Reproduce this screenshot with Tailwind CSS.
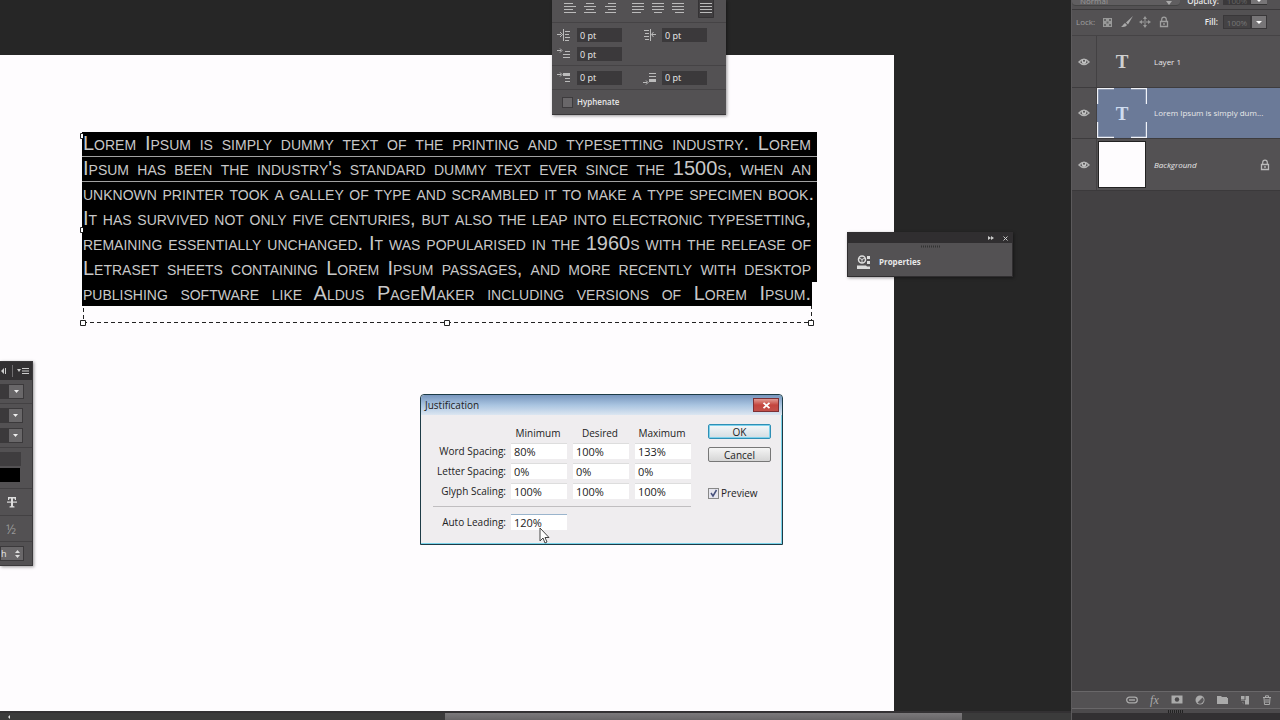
<!DOCTYPE html>
<html lang="en">
<head>
<meta charset="utf-8">
<title>Justification</title>
<script src="https://cdn.jsdelivr.net/npm/@tailwindcss/browser@4"></script>
</head>
<body class="h-screen overflow-hidden bg-[#262626] font-['Open_Sans',sans-serif] text-[8px] text-[#e8e8e8]">
<svg class="hidden">
  <symbol id="eye" viewBox="0 0 12 10"><path d="M1 5Q6-.5 11 5Q6 10 1 5Z" fill="none" stroke="#b4b4b4" stroke-width="1.4"/><circle cx="6" cy="4.6" r="2.3" fill="#c4c4c4"/><circle cx="6" cy="3.8" r="1" fill="#504e50"/></symbol>
  <symbol id="lock" viewBox="0 0 10 12"><path d="M2.7 6V3.5a2.3 2.3 0 014.6 0V6" fill="none" stroke="currentColor" stroke-width="1.2"/><path d="M1.5 5.5h7v5h-7zM5 7v2" fill="none" stroke="currentColor" stroke-width="1.3"/></symbol>
</svg>
<div class="relative flex h-full">
  <main class="relative flex min-w-0 flex-1 flex-col">
    <section class="relative mt-[55px] mr-[177px] flex-1 bg-[#fefcfe]">
      <div class="absolute top-[77px] left-[82px] w-[735px]">
        <div class="font-['Liberation_Sans',Arial,sans-serif] text-[20px] leading-[23px] text-[#c8c8c8] [font-variant-caps:small-caps] [text-align-last:justify] whitespace-nowrap">
          <p class="h-[25px] border-b border-[#a0a0a0] bg-black pr-[6px] pl-px">Lorem Ipsum is simply dummy text of the printing and typesetting industry. Lorem</p>
          <p class="h-[25px] border-b border-[#a0a0a0] bg-black pr-[6px] pl-px">Ipsum has been the industry's standard dummy text ever since the 1500s, when an</p>
          <p class="h-[25px] bg-black pr-[6px] pl-px">unknown printer took a galley of type and scrambled it to make a type specimen book.</p>
          <p class="h-[25px] bg-black pr-[6px] pl-px">It has survived not only five centuries, but also the leap into electronic typesetting,</p>
          <p class="h-[25px] bg-black pr-[6px] pl-px">remaining essentially unchanged. It was popularised in the 1960s with the release of</p>
          <p class="h-[25px] bg-black pr-[6px] pl-px">Letraset sheets containing Lorem Ipsum passages, and more recently with desktop</p>
          <p class="mr-[5px] h-[24px] bg-black pr-px pl-px">publishing software like Aldus PageMaker including versions of Lorem Ipsum.</p>
        </div>
        <svg class="absolute -top-[2px] -left-[2px] h-[196px] w-[738px]" viewBox="0 0 738 196" fill="none" stroke="#222">
          <path d="M3.500 178V192.500H731.500V176" stroke-dasharray="4 3"/>
          <g fill="#fff"><path d="M3 3.500H.5v5H3M3 97.500H.5v5H3"/><path d="M.5 190.500h5v5h-5zM364.500 190.500h5v5h-5zM728.500 190.500h5v5h-5z"/></g>
        </svg>
      </div>
    </section>
    <div class="flex h-[9px] border-t-2 border-[#333133] bg-[#3b3b3b]">
      <div class="w-[445px] pl-[7px]"><svg class="h-[6px] w-[4px]" viewBox="0 0 4 6"><path d="M3 2v4L1 4z" fill="#ddd"/></svg></div>
      <div class="w-[517px] bg-linear-to-b from-[#7b797b] to-[#686668]"></div>
    </div>
  </main>

  <aside class="flex w-[209px] shrink-0 flex-col border-l border-[#5c5a5c] bg-[#434143]">
    <div class="flex h-[10px] items-start justify-between overflow-hidden border-b border-[#3b393b] bg-[#535153]">
      <div class="flex h-[6px] w-[108px] items-end justify-between rounded-b-sm border-b border-[#444] bg-[#605e60] px-2 leading-[9px] text-[#999]"><span>Normal</span><svg class="h-[4px] w-[6px]" viewBox="0 0 6 4"><path d="M0 0h6L3 4z" fill="#aaa"/></svg></div>
      <div class="flex h-[5px] items-end pr-[13px] leading-[9px]"><span class="mr-[4px] font-semibold">Opacity:</span><span class="w-[28px] bg-[#3b393b] text-center text-[#666]">100%</span><span class="flex h-[6px] w-[16px] justify-center border-b border-[#333] bg-[#777577]"><svg class="h-[4px] w-[6px]" viewBox="0 0 6 4"><path d="M0 0h6L3 3z" fill="#fff"/></svg></span></div>
    </div>
    <div class="flex h-[26px] items-center border-b border-[#454345] bg-[#535153] pr-[13px] pb-px pl-[4px] text-[#a0a0a0]">
      <span class="w-[26px] text-[8px]">Lock:</span>
      <button aria-label="Lock transparent pixels" class="w-[19px]"><svg class="size-[11px]" viewBox="0 0 11 11"><path d="M1 1h9v9H1z" fill="#999"/><path d="M2 2h2v2H2zM7 2h2v2H7zM4.500 4.500h2v2h-2zM2 7h2v2H2zM7 7h2v2H7z" fill="#666"/></svg></button>
      <button aria-label="Lock image pixels" class="w-[18px]"><svg class="size-[12px]" viewBox="0 0 12 12" fill="#aaa"><path d="M12 0L7 8.500 5 6.500zM4 7l2 2C5 11 2 11 0 11 2 10 2 8 4 7z"/></svg></button>
      <button aria-label="Lock position" class="w-[20px]"><svg class="size-[12px]" viewBox="0 0 12 12" fill="#999"><path d="M6 0l2 3H4zM6 12l2-3H4zM0 6l3-2v4zM12 6L9 4v4zM5.500 3v6h1V3zM3 5.500h6v1H3z"/></svg></button>
      <button aria-label="Lock all" class="w-[12px]"><svg class="h-[12px] w-[10px]"><use href="#lock"/></svg></button>
      <label for="fill" class="ml-auto pr-[5px] text-[8px] font-semibold text-[#eee]">Fill:</label>
      <input id="fill" value="100%" class="h-[14px] w-[28px] border border-[#393739] bg-[#444244] text-center text-[#777]">
      <button aria-label="Fill options" class="flex h-[14px] w-[16px] items-center justify-center border border-[#393739] bg-[#777577]"><svg class="h-[3px] w-[6px]" viewBox="0 0 6 3"><path d="M0 0h6L3 3z" fill="#fff"/></svg></button>
    </div>
    <div class="flex h-[52px] items-center border-b border-[#3e3c3e] bg-[#535153]">
      <button aria-label="Toggle Layer 1" class="flex h-full w-[25px] items-center justify-center border-r border-[#434143] pr-px"><svg class="h-[10px] w-[12px]"><use href="#eye"/></svg></button>
      <span class="flex w-[50px] justify-center font-['Liberation_Serif',serif] text-[19px] leading-none font-bold text-[#d0d0d0]">T</span>
      <span class="pl-[7px]">Layer 1</span>
    </div>
    <div class="flex h-[51px] items-center border-b border-[#3e3c3e] bg-[#6b7a98]">
      <button aria-label="Toggle text layer" class="flex h-full w-[25px] items-center justify-center border-r border-[#434143] bg-[#535153] pr-px"><svg class="h-[10px] w-[12px]"><use href="#eye"/></svg></button>
      <span class="relative flex h-[50px] w-[50px] items-center justify-center font-['Liberation_Serif',serif] text-[19px] leading-none font-bold text-[#cfdcf0]">T
        <svg class="absolute inset-0 size-[50px]" viewBox="0 0 50 50" fill="none" stroke="#f0f2f8" stroke-width="1.2"><path d="M17 .6H.6V16M34 .6h15.400V16M17 49.400H.6V34M34 49.400h15.400V34"/></svg></span>
      <span class="pl-[7px] whitespace-nowrap">Lorem Ipsum is simply dum...</span>
    </div>
    <div class="flex h-[52px] items-center border-b border-[#3b393b] bg-[#535153] pr-[10px]">
      <button aria-label="Toggle Background" class="flex h-full w-[25px] items-center justify-center border-r border-[#434143] pr-px"><svg class="h-[10px] w-[12px]"><use href="#eye"/></svg></button>
      <span class="ml-[1px] h-[47px] w-[48px] border border-[#222] bg-[#fefcfe]"></span>
      <span class="pl-[8px] italic">Background</span>
      <svg class="ml-auto h-[12px] w-[10px] text-[#bbb]"><use href="#lock"/></svg>
    </div>
    <div class="mt-auto flex h-[17px] items-center justify-between border-t border-[#696769] bg-[#535153] pr-[8px] pb-px pl-[54px] text-[#aaa]">
      <button aria-label="Link layers"><svg class="h-[8px] w-[12px]" viewBox="0 0 12 8"><rect x=".7" y="1.200" width="10.600" height="5.600" rx="2.800" fill="none" stroke="currentColor" stroke-width="1.300"/><path d="M3 4h6" stroke="currentColor" stroke-width="1.400"/></svg></button>
      <button aria-label="Layer style" class="font-['Liberation_Serif',serif] text-[12px] leading-none italic">fx</button>
      <button aria-label="Add mask"><svg class="h-[9px] w-[12px]" viewBox="0 0 12 9"><path d="M.5.5h11v8H.5z" fill="currentColor"/><circle cx="6" cy="4.500" r="2.200" fill="#4b494b"/></svg></button>
      <button aria-label="Adjustment layer"><svg class="size-[10px]" viewBox="0 0 10 10"><circle cx="5" cy="5" r="4.500" fill="currentColor"/><path d="M2.500 7.500l5-5a3.500 3.500 0 01-5 5z" fill="#5b595b"/></svg></button>
      <button aria-label="New group"><svg class="h-[9px] w-[11px]" viewBox="0 0 11 9"><path d="M0 1h4l1 1h5v1h1v6H0z" fill="currentColor"/></svg></button>
      <button aria-label="New layer"><svg class="size-[10px]" viewBox="0 0 10 10"><path d="M1 1h8v8.500H5V6H1z" fill="currentColor"/><path d="M1 7h3v2.500zM5 1v4H1" stroke="#535153" fill="currentColor"/></svg></button>
      <button aria-label="Delete layer"><svg class="size-[10px]" viewBox="0 0 10 10" fill="none" stroke="currentColor"><path d="M1 2.500h8M3.500 2V.8h3V2M2 3l.5 6.500h5L8 3M4 4v4M6 4v4"/></svg></button>
    </div>
    <div class="flex h-[5px] items-center justify-center border-t border-[#696769] bg-[#4c4a4c]"><svg class="h-[3px] w-[16px]" viewBox="0 0 16 3"><path d="M0 1.500h16" stroke="#222" stroke-width="3" stroke-dasharray="1 1"/></svg></div>
    <div class="h-[7px] bg-[#323032]"></div>
  </aside>

  <section aria-label="Paragraph" class="absolute top-0 left-[552px] flex w-[174px] flex-col border-b border-[#393739] bg-[#535153] shadow-[1px_1px_3px_#0006]">
    <div class="flex h-[23px] items-start border-b border-[#454345] text-[#bbb]">
      <svg class="h-[18px] w-full" viewBox="0 0 174 18" fill="none" stroke="currentColor"><path d="M146.500 0v17.500h15V0" fill="#403e40" stroke="#353335"/><path d="M12 3.500h9m-9 3h12m-12 3h9m-9 3h12M34 3.500h8m-10 3h12m-10 3h8m-10 3h12M56 3.500h8m-11 3h11m-8 3h8m-11 3h11M80 3.500h12m-12 3h12m-12 3h12m-12 3h9M100 3.500h12m-12 3h12m-12 3h12m-10 3h8M120 3.500h12m-12 3h12m-12 3h12m-9 3h9M148 3.500h12m-12 3h12m-12 3h12m-12 3h12"/></svg>
    </div>
    <div class="grid h-[43px] grid-cols-[20px_66px_19px_45px] content-start gap-y-[5px] border-b border-[#454345] pt-[5px] pl-[5px] text-[#bbb]">
      <svg class="size-[14px]" viewBox="0 0 14 12" fill="none" stroke="currentColor"><path d="M0 5.500h4M3 3l2.500 2.500L3 8M6.500 0v12M8 2.500h5m-5 3h4m-4 3h5m-5 3h4"/></svg>
      <input aria-label="Indent left margin" value="0 pt" class="h-[14px] w-[45px] bg-[#3b393b] px-[3px] text-[9px] text-[#eee]">
      <svg class="size-[14px]" viewBox="0 0 14 12" fill="none" stroke="currentColor"><path d="M13 5.500H9M10.500 3L8.500 5.500l2 2.500M7.500 0v12M1 1.500h5m-4 3h4m-5 3h5m-4 3h4"/></svg>
      <input aria-label="Indent right margin" value="0 pt" class="h-[14px] w-[45px] bg-[#3b393b] px-[3px] text-[9px] text-[#eee]">
      <svg class="size-[14px]" viewBox="0 0 14 12" fill="none" stroke="currentColor"><path d="M0 2.500h4M3 .5l2 2-2 2M8 3.500h5m-7 3h7m-7 3h7"/></svg>
      <input aria-label="Indent first line" value="0 pt" class="h-[14px] w-[45px] bg-[#3b393b] px-[3px] text-[9px] text-[#eee]">
    </div>
    <div class="grid h-[24px] grid-cols-[20px_66px_19px_45px] content-center border-b border-[#454345] pl-[5px] text-[#bbb]">
      <svg class="size-[14px]" viewBox="0 0 14 12" fill="none" stroke="currentColor"><path d="M0 2.500h4M3 .5l2 2-2 2M8 6.500h5m-5 3h5"/><path d="M6 2.500h7" stroke-width="3"/></svg>
      <input aria-label="Space before paragraph" value="0 pt" class="h-[14px] w-[45px] bg-[#3b393b] px-[3px] text-[9px] text-[#eee]">
      <svg class="size-[14px]" viewBox="0 0 14 12" fill="none" stroke="currentColor"><path d="M0 10.500h4M3 8.500l2 2-2 2M6 1.500h7m-7 3h7"/><path d="M6 8.500h7" stroke-width="3"/></svg>
      <input aria-label="Space after paragraph" value="0 pt" class="h-[14px] w-[45px] bg-[#3b393b] px-[3px] text-[9px] text-[#eee]">
    </div>
    <label class="flex h-[24px] items-center gap-[4px] pl-[10px] text-[8px] font-semibold"><input type="checkbox" class="size-[11px] appearance-none border border-[#3d3b3d] bg-[#696769]">Hyphenate</label>
  </section>

  <section aria-label="Character" class="absolute top-[361px] left-0 flex w-[33px] flex-col border border-l-0 border-[#3b393b] bg-[#535153] shadow-[1px_1px_3px_#0006]">
    <div class="flex h-[18px] items-center justify-end bg-[#323032] pr-[3px]"><svg class="h-[12px] w-[29px]" viewBox="0 0 29 12" fill="#ccc"><path d="M4 3v6L1 6zM5 3h1v6H5z"/><path d="M12 0h1v12h-1z" opacity=".4"/><path d="M17 4h4l-2 3z"/><path d="M22 3.500h7m-7 2.500h7m-7 2.500h7" stroke="#ccc"/></svg></div>
    <div class="flex h-[24px] items-center border-b border-[#434143]"><span class="h-[15px] w-[8px] bg-[#3b393b]"></span><button aria-label="Font list" class="flex h-[15px] w-[16px] items-center justify-center border border-[#3b393b] bg-[#696769]"><svg class="h-[3px] w-[5px]" viewBox="0 0 5 3"><path d="M0 0h5L2.500 3z" fill="#eee"/></svg></button></div>
    <div class="flex h-[44px] flex-col justify-center gap-[5px] border-b border-[#434143]">
      <div class="flex"><span class="h-[15px] w-[8px] bg-[#3b393b]"></span><button aria-label="Leading list" class="flex h-[15px] w-[15px] items-center justify-center border border-[#3b393b] bg-[#696769]"><svg class="h-[3px] w-[5px]" viewBox="0 0 5 3"><path d="M0 0h5L2.500 3z" fill="#eee"/></svg></button></div>
      <div class="flex"><span class="h-[15px] w-[8px] bg-[#3b393b]"></span><button aria-label="Tracking list" class="flex h-[15px] w-[15px] items-center justify-center border border-[#3b393b] bg-[#696769]"><svg class="h-[3px] w-[5px]" viewBox="0 0 5 3"><path d="M0 0h5L2.500 3z" fill="#eee"/></svg></button></div>
    </div>
    <div class="flex h-[41px] flex-col gap-[2px] border-b border-[#434143] pt-[4px]"><span class="h-[14px] w-[21px] bg-[#3f3d3f]"></span><button aria-label="Text color" class="h-[14px] w-[20px] bg-black"></button></div>
    <button aria-label="Strikethrough" class="flex h-[27px] items-center border-b border-[#434143] pl-[7px]"><svg class="h-[11px] w-[10px]" viewBox="0 0 10 11" fill="#ddd"><path d="M1 0h8v3H8L7.500 1.500H6V9l1.500.5v1h-5v-1L4 9V1.500H2.500L2 3H1z"/><path d="M0 4.500h10v1.200H0z"/></svg></button>
    <button aria-label="Fractions" class="h-[26px] border-b border-[#434143] pl-[6px] text-left text-[13px] leading-[24px] text-[#999]">½</button>
    <div class="flex h-[23px] items-center"><button class="flex h-[15px] w-[24px] items-center justify-between border border-[#3b393b] bg-[#696769] pr-[3px] text-[9px]">h<svg class="h-[8px] w-[5px]" viewBox="0 0 5 8"><path d="M0 3h5L2.500 0zM0 5h5L2.500 8z" fill="#ddd"/></svg></button></div>
  </section>

  <section aria-label="Properties" class="absolute top-[232px] left-[847px] w-[166px] border border-[#302e30] bg-[#535153] shadow-[1px_1px_3px_#0006]">
    <div class="flex h-[10px] items-center justify-end gap-[9px] bg-[#302e30] pr-[4px]"><svg class="h-[4px] w-[6px]" viewBox="0 0 6 4"><path d="M0 0l3 2-3 2zM3 0l3 2-3 2z" fill="#ccc"/></svg><button aria-label="Close Properties"><svg class="size-[5px]" viewBox="0 0 5 5"><path d="M.5.5l4 4m0-4l-4 4" stroke="#ccc"/></svg></button></div>
    <svg class="mx-auto h-[5px] w-[19px]" viewBox="0 0 19 5"><path d="M0 3.500h19" stroke="#333" stroke-width="2" stroke-dasharray="1 1"/></svg>
    <div class="flex h-[28px] items-center gap-[7px] pl-[9px] text-[8px] font-bold"><svg class="h-[15px] w-[15px]" viewBox="0 0 15 15" fill="#ddd"><circle cx="5" cy="4.500" r="3.500" fill="none" stroke="#ddd" stroke-width="1.500"/><path d="M2 3l3 1.500L8 3M5 4.500V8" stroke="#ddd" fill="none"/><path d="M10 1h3v3h-3zM10 6h3v3h-3zM0 10.500h9l1 1h3V14H0z"/></svg>Properties</div>
  </section>

  <form class="absolute top-[394px] left-[420px] flex w-[363px] flex-col rounded-t-sm border border-[#1d3b46] bg-[#efedef] font-['Open_Sans',sans-serif] text-[10px] leading-[14px] text-[#222] shadow-[inset_-1px_-1px_#79d3ea]">
    <div class="flex h-[20px] items-center justify-between rounded-t-sm bg-linear-to-b from-[#7896bd] via-[#a9c4e0] to-[#dce6f1] pr-[3px] pl-[4px]"><span>Justification</span><button type="button" aria-label="Close" class="flex h-[14px] w-[26px] items-center justify-center border border-[#7d3035] bg-linear-to-b from-[#e09a94] via-[#c4453e] to-[#c2504a]"><svg class="h-[7px] w-[9px]" viewBox="0 0 9 7"><path d="M1.500.8l6 5.400m0-5.400l-6 5.400" stroke="#fff" stroke-width="1.800"/></svg></button></div>
    <div class="flex h-[129px] justify-between pr-[11px] pl-[12px]">
      <div class="pt-[10px]">
        <table class="border-collapse">
          <thead><tr class="h-[16px]"><td class="w-[78px]"></td><th class="w-[62px] p-0 font-normal" scope="col"><span class="block w-[54px] text-center">Minimum</span></th><th class="w-[62px] p-0 font-normal" scope="col"><span class="block w-[54px] text-center">Desired</span></th><th class="w-[56px] p-0 font-normal" scope="col"><span class="block w-[54px] text-center">Maximum</span></th></tr></thead>
          <tbody>
            <tr class="h-[20px]"><th scope="row" class="p-0 pr-[5px] text-right font-normal whitespace-nowrap">Word Spacing:</th><td class="p-0"><input aria-label="Word Spacing minimum" value="80%" class="block h-[16px] w-[56px] border-t border-[#ddd] bg-white px-[3px] text-[11px]"></td><td class="p-0"><input aria-label="Word Spacing desired" value="100%" class="block h-[16px] w-[56px] border-t border-[#ddd] bg-white px-[3px] text-[11px]"></td><td class="p-0"><input aria-label="Word Spacing maximum" value="133%" class="block h-[16px] w-[56px] border-t border-[#ddd] bg-white px-[3px] text-[11px]"></td></tr>
            <tr class="h-[20px]"><th scope="row" class="p-0 pr-[5px] text-right font-normal whitespace-nowrap">Letter Spacing:</th><td class="p-0"><input aria-label="Letter Spacing minimum" value="0%" class="block h-[16px] w-[56px] border-t border-[#ddd] bg-white px-[3px] text-[11px]"></td><td class="p-0"><input aria-label="Letter Spacing desired" value="0%" class="block h-[16px] w-[56px] border-t border-[#ddd] bg-white px-[3px] text-[11px]"></td><td class="p-0"><input aria-label="Letter Spacing maximum" value="0%" class="block h-[16px] w-[56px] border-t border-[#ddd] bg-white px-[3px] text-[11px]"></td></tr>
            <tr class="h-[20px]"><th scope="row" class="p-0 pr-[5px] text-right font-normal whitespace-nowrap">Glyph Scaling:</th><td class="p-0"><input aria-label="Glyph Scaling minimum" value="100%" class="block h-[16px] w-[56px] border-t border-[#ddd] bg-white px-[3px] text-[11px]"></td><td class="p-0"><input aria-label="Glyph Scaling desired" value="100%" class="block h-[16px] w-[56px] border-t border-[#ddd] bg-white px-[3px] text-[11px]"></td><td class="p-0"><input aria-label="Glyph Scaling maximum" value="100%" class="block h-[16px] w-[56px] border-t border-[#ddd] bg-white px-[3px] text-[11px]"></td></tr>
          </tbody>
        </table>
        <div class="mt-[5px] flex items-center border-t border-[#c0bec0] pt-[7px]"><label for="lead" class="w-[78px] pr-[5px] text-right whitespace-nowrap">Auto Leading:</label><input id="lead" value="120%" class="h-[16px] w-[56px] border-t border-[#9ab4cc] bg-white px-[3px] text-[11px]"></div>
      </div>
      <div class="flex w-[63px] flex-col gap-[8px] pt-[9px]">
        <button class="h-[15px] rounded-[2px] border border-[#2f8fb5] bg-linear-to-b from-[#f4f8fa] to-[#d4dde2] leading-[12px] shadow-[inset_0_0_0_1px_#7fd2ec]">OK</button>
        <button type="button" class="h-[15px] rounded-[2px] border border-[#777] bg-linear-to-b from-[#f5f5f5] to-[#d5d5d5] leading-[12px]">Cancel</button>
        <label class="mt-[16px] flex h-[14px] items-center gap-[2px]"><span class="relative flex"><input type="checkbox" checked class="size-[11px] appearance-none border border-[#888] bg-[#e6e6ee]"><svg class="absolute inset-0 size-[11px]" viewBox="0 0 11 11"><path d="M3 5l2 3 3.500-6" fill="none" stroke="#46507c" stroke-width="1.500"/></svg></span>Preview</label>
      </div>
    </div>
  </form>
  <svg class="absolute top-[527px] left-[539px] h-[17px] w-[12px]" viewBox="0 0 12 17"><path d="M1 1v13l3-3 2 5 2-1-2-4.500h4z" fill="#fff" stroke="#444"/></svg>
</div>
</body>
</html>
